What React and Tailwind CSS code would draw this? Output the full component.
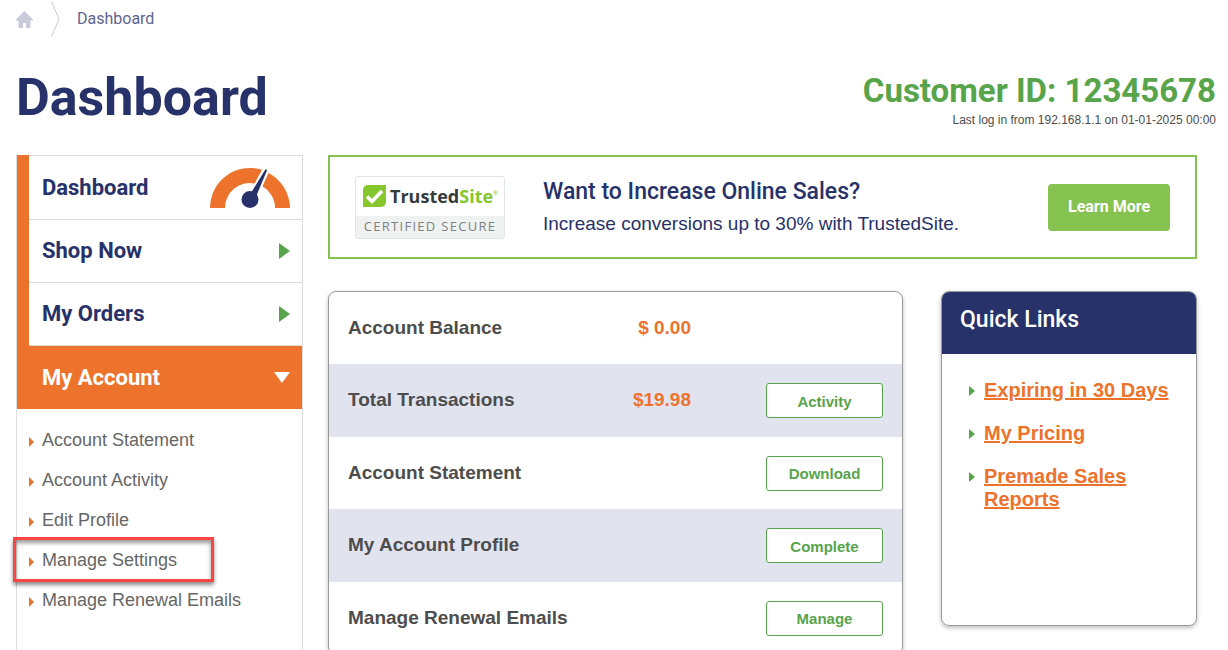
import React from 'react';

const menu = [
  { label: 'Dashboard', gauge: true },
  { label: 'Shop Now' },
  { label: 'My Orders' },
];

const subMenu = [
  { label: 'Account Statement' },
  { label: 'Account Activity' },
  { label: 'Edit Profile' },
  { label: 'Manage Settings', highlight: true },
  { label: 'Manage Renewal Emails' },
];

const accountRows = [
  { label: 'Account Balance', value: '$ 0.00' },
  { label: 'Total Transactions', value: '$19.98', action: 'Activity' },
  { label: 'Account Statement', action: 'Download' },
  { label: 'My Account Profile', action: 'Complete' },
  { label: 'Manage Renewal Emails', action: 'Manage' },
];

const quickLinks = ['Expiring in 30 Days', 'My Pricing', 'Premade Sales Reports'];

function Gauge() {
  return (
    <svg width="80" height="42" viewBox="0 0 80 42" aria-hidden="true">
      <path d="M0 41A40 40 0 0 1 52 2.800L44.500 16.400A25 25 0 0 0 15 41Z" fill="#ed732d" />
      <path d="M58.500 6A40 40 0 0 1 80 41H65A25 25 0 0 0 52.500 19.300Z" fill="#ed732d" />
      <path d="M55.500 2.200L57.200 3L46.500 28.500L41 26Z" fill="#27316a" />
      <circle cx="40" cy="32.500" r="8.500" fill="#27316a" />
    </svg>
  );
}

function Arrow({ className, points = '0,0 11,8 0,16', box = '0 0 11 16' }) {
  return (
    <svg viewBox={box} className={className} fill="currentColor" aria-hidden="true">
      <polygon points={points} />
    </svg>
  );
}

function Breadcrumb() {
  return (
    <nav className="flex items-center h-[38px] font-['Roboto',sans-serif] text-[16px] leading-5 text-[#5d648f]">
      <a href="#home" aria-label="Home">
        <svg width="17" height="17" viewBox="0 0 17 17" fill="#c9cada">
          <path d="M8.500 0L0 8.500V9.500H2.500V17H7V12H10V17H14.500V9.500H17V8.500Z" />
        </svg>
      </a>
      <svg className="ml-[18px]" width="9" height="36" viewBox="0 0 9 36" fill="none" stroke="#c9cada">
        <path d="M0.500 0.500L8 18L0.500 35.500" />
      </svg>
      <span className="ml-[17px]">Dashboard</span>
    </nav>
  );
}

function Sidebar() {
  return (
    <aside className="w-[287px] shrink-0 border-x border-[#dcdcdc]">
      <ul className="font-['Roboto',sans-serif] text-[22px] leading-7 font-bold text-[#27316a]">
        {menu.map((item) => (
          <li key={item.label} className="border-l-12 border-[#ed732d]">
            <a
              href="#menu"
              className={
                item.gauge
                  ? 'flex items-center justify-between h-[65px] pl-[13px] pr-3 border-y border-[#dcdcdc]'
                  : 'flex items-center justify-between h-[63px] pl-[13px] pr-3 border-b border-[#dcdcdc]'
              }
            >
              <span>{item.label}</span>
              {item.gauge ? <Gauge /> : <Arrow className="w-[11px] h-4 text-[#58a44b]" />}
            </a>
          </li>
        ))}
        <li>
          <a href="#account" className="flex items-center justify-between h-[63px] pl-[25px] pr-3 bg-[#ed732d] text-white">
            <span>My Account</span>
            <Arrow className="w-4 h-[11px]" points="0,0 16,0 8,11" box="0 0 16 11" />
          </a>
        </li>
      </ul>
      <ul className="pt-[11px] font-['Liberation_Sans',Arial,sans-serif] text-[18px] leading-10 text-[#666666]">
        {subMenu.map((item) => (
          <li key={item.label} className="relative h-10 pl-3">
            <a href="#sub" className="flex items-center gap-2">
              <Arrow className="w-[5px] h-[10px] mt-1 text-[#ed732d]" points="0,0 5,5 0,10" box="0 0 5 10" />
              {item.label}
            </a>
            {item.highlight && (
              <div className="absolute -left-1 -top-[3px] w-[201px] h-[45px] border-3 border-[#fb4444] shadow-[0_3px_4px_rgba(0,0,0,0.45),inset_0_3px_4px_rgba(0,0,0,0.4)] pointer-events-none" />
            )}
          </li>
        ))}
      </ul>
    </aside>
  );
}

function TrustedBadge() {
  return (
    <div className="w-[150px] h-[63px] shrink-0 rounded-[3px] border border-[#e2e4e4] overflow-hidden flex flex-col font-['Open_Sans','Noto_Sans',sans-serif]">
      <div className="flex flex-1 items-center pl-[7px]">
        <svg width="23" height="22" viewBox="0 0 23 22" className="shrink-0">
          <path d="M5 0H23V17A5 5 0 0 1 18 22H0V5A5 5 0 0 1 5 0Z" fill="#85c72d" />
          <path d="M4 11.500L9 16.500L19 6" fill="none" stroke="#fff" strokeWidth="3.600" />
        </svg>
        <span className="ml-1 text-[18px] leading-6 font-bold text-[#343b3b]">
          Trusted<span className="text-[#85c72d]">Site</span>
        </span>
        <span className="self-start mt-3 text-[6px] leading-2 text-[#85c72d]">®</span>
      </div>
      <div className="h-[22px] bg-[#f0f2f2] text-center text-[13px] leading-[21px] tracking-widest font-medium text-[#7d8282] whitespace-nowrap">
        CERTIFIED SECURE
      </div>
    </div>
  );
}

function Banner() {
  return (
    <section className="flex items-center h-[104px] border-2 border-[#86c250] px-[25px]">
      <TrustedBadge />
      <div className="ml-[38px] pt-[2px] flex-1 text-[#27316a]">
        <h2 className="font-['Roboto',sans-serif] text-[23px] leading-8 font-medium">Want to Increase Online Sales?</h2>
        <p className="font-['Liberation_Sans',Arial,sans-serif] text-[19px] leading-8">
          Increase conversions up to 30% with TrustedSite.
        </p>
      </div>
      <button className="w-[122px] h-[47px] rounded-[4px] bg-[#86c250] text-white font-['Roboto',sans-serif] text-[16px] font-bold">
        Learn More
      </button>
    </section>
  );
}

function AccountCard() {
  return (
    <section className="flex-1 min-w-0 rounded-lg border border-[#999999] shadow-[0_2px_4px_rgba(0,0,0,0.25)] overflow-hidden">
      <table className="w-full font-['Liberation_Sans',Arial,sans-serif] text-[19px] font-bold text-[#4d4d4d]">
        <tbody>
          {accountRows.map((row) => (
            <tr key={row.label} className="h-[72px] even:h-[73px] even:bg-[#e1e3ee]">
              <th scope="row" className="pl-[19px] text-left">{row.label}</th>
              <td className="w-[80px] text-right text-[#ed732d]">{row.value}</td>
              <td className="w-[211px] pr-[19px] text-right">
                {row.action && (
                  <button className="block ml-auto w-[117px] h-[35px] pt-[3px] rounded-[3px] border border-[#58a44b] bg-white text-[15px] text-[#58a44b]">
                    {row.action}
                  </button>
                )}
              </td>
            </tr>
          ))}
        </tbody>
      </table>
    </section>
  );
}

function QuickLinks() {
  return (
    <section className="w-[256px] h-[335px] shrink-0 rounded-lg border border-[#999999] shadow-[0_2px_4px_rgba(0,0,0,0.25)] overflow-hidden">
      <h2 className="h-[62px] pl-[18px] bg-[#27316a] text-white font-['Roboto',sans-serif] text-[23px] leading-[56px] font-medium">
        Quick Links
      </h2>
      <ul className="pt-[25px] pl-[27px] pr-5 space-y-5 font-['Liberation_Sans',Arial,sans-serif] text-[20px] leading-[23px] font-bold text-[#ed732d]">
        {quickLinks.map((link) => (
          <li key={link} className="flex items-start gap-[9px]">
            <Arrow className="w-[6px] h-[10px] mt-[7px] shrink-0 text-[#58a44b]" points="0,0 6,5 0,10" box="0 0 6 10" />
            <a href="#quick" className="underline decoration-2">{link}</a>
          </li>
        ))}
      </ul>
    </section>
  );
}

export default function App() {
  return (
    <div className="min-h-screen bg-white pl-4">
      <Breadcrumb />
      <header className="flex justify-between pr-3 h-[117px]">
        <h1 className="pt-[30px] font-['Roboto',sans-serif] text-[52px] leading-[60px] font-bold text-[#27316a]">Dashboard</h1>
        <div className="pt-[33px] text-right">
          <p className="font-['Roboto',sans-serif] text-[33px] leading-10 font-bold text-[#58a44b]">Customer ID: 12345678</p>
          <p className="font-['Liberation_Sans',Arial,sans-serif] text-[12px] leading-[18px] text-[#4d4d4d]">
            Last log in from 192.168.1.1 on 01-01-2025 00:00
          </p>
        </div>
      </header>
      <div className="flex gap-[25px] pr-[31px]">
        <Sidebar />
        <main className="flex-1 min-w-0">
          <Banner />
          <div className="flex items-start gap-[38px] mt-8">
            <AccountCard />
            <QuickLinks />
          </div>
        </main>
      </div>
    </div>
  );
}
